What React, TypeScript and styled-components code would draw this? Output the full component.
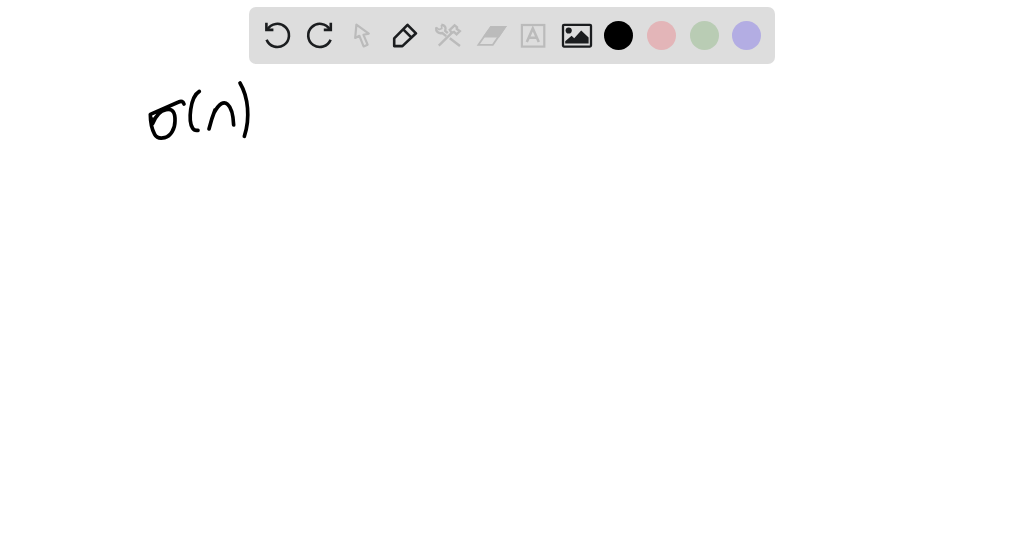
import React, { useState } from "react";
import styled, { createGlobalStyle } from "styled-components";

const GlobalStyle = createGlobalStyle`
  *, *::before, *::after { box-sizing: border-box; }
  body { margin: 0; background: #ffffff; font-family: "Liberation Sans", Arial, sans-serif; }
`;

const Page = styled.div`
  display: flex;
  flex-direction: column;
  min-height: 100vh;
`;

const Header = styled.header`
  display: flex;
  justify-content: center;
  padding: 7px 8px 0;
`;

const Toolbar = styled.div`
  display: flex;
  flex: 1;
  align-items: center;
  justify-content: space-between;
  max-width: 526px;
  padding: 13px 12px;
  border-radius: 7px;
  background: #dddddd;
`;

const ToolButton = styled.button`
  display: flex;
  width: 32px;
  height: 31px;
  padding: 0;
  border: 0;
  background: none;
  color: #1b1d1f;
  cursor: pointer;

  &:disabled {
    color: #bbbbbb;
    cursor: default;
  }
`;

const Icon = styled.svg`
  width: 32px;
  height: 31px;
  fill: none;
  stroke: currentColor;
  stroke-width: 2.6px;
  overflow: visible;
`;

const SwatchSlot = styled.label`
  display: flex;
  justify-content: center;
  width: 32px;
`;

const Swatch = styled.input<{ $color: string }>`
  appearance: none;
  width: 29px;
  height: 29px;
  margin: 0;
  border-radius: 50%;
  background: ${(p) => p.$color};
  cursor: pointer;
`;

const Board = styled.main`
  display: flex;
  flex: 1;
`;

const Drawing = styled.svg`
  flex: 1;
  min-height: 160px;
  fill: none;
  stroke: #000000;
  stroke-width: 11px;
  stroke-linecap: round;
  stroke-linejoin: round;
`;

type Tool = { name: string; disabled?: boolean; art: React.ReactNode };

const tools: Tool[] = [
  {
    name: "Undo",
    art: (
      <g>
        <path d="M5.4 2.8V9.9H12.4" />
        <path d="M6.4 9.5A11.6 11.6 0 1 1 5.6 19.7" />
      </g>
    ),
  },
  {
    name: "Redo",
    art: (
      <g>
        <path d="M26.8 2.8V9.9H19.8" />
        <path d="M25.8 9.5A11.6 11.6 0 1 0 26.6 19.7" />
      </g>
    ),
  },
  {
    name: "Select",
    disabled: true,
    art: (
      <path
        d="M10.4 4.6L9.2 18L13.4 15.8L17.6 26.4L21.6 24.7L17.5 14.8L22.8 13.6Z"
        strokeWidth="2.2"
        strokeLinejoin="round"
      />
    ),
  },
  {
    name: "Pen",
    art: (
      <path
        d="M5.2 26.1V18.4L18.5 4.8L27 13.3L13.4 26.1ZM14 9.2L22.5 17.7"
        strokeLinejoin="round"
      />
    ),
  },
  {
    name: "Tools",
    disabled: true,
    art: (
      <g strokeWidth="2.4">
        <path d="M4.2 7.4C3.6 11.4 6.6 14.2 10.4 13L14.2 16.2M17.8 18.2L28 26M9.4 4.8C12.8 5 14.4 7.6 13.2 10.8L15.8 13.2" />
        <path d="M4.2 7.4L7 9.6L9.8 8.4L9.4 4.8" strokeWidth="1.6" />
        <path d="M6.8 25.6L20 12.6" />
        <path d="M17.8 9.8L22.6 5.4L25 7.2L24.8 9L27.8 11.2L24.6 14.4L22 11.9L19.6 12.8Z" />
      </g>
    ),
  },
  {
    name: "Eraser",
    disabled: true,
    art: (
      <g strokeWidth="1.8">
        <path d="M3.4 24.8L16 6.8H30.2L17.8 24.8Z" />
        <path d="M9.2 16.5L16 6.8H30.2L23.6 16.5Z" fill="currentColor" />
      </g>
    ),
  },
  {
    name: "Text",
    disabled: true,
    art: (
      <g strokeWidth="2.2">
        <rect x="4.9" y="5" width="22.4" height="21.6" />
        <path d="M9.8 22L15.8 8.4L21.8 22M12 17.8H19.6" strokeWidth="2.5" />
      </g>
    ),
  },
  {
    name: "Image",
    art: (
      <g>
        <rect x="3" y="4.8" width="28" height="21.8" rx="1" strokeWidth="2.3" />
        <circle cx="8.7" cy="10.5" r="3.1" fill="currentColor" stroke="none" />
        <path
          d="M5.2 23.4V21.2L11.6 15.8L14.2 18.2L21.2 10.4L28.6 17.6V23.4Z"
          fill="currentColor"
          stroke="none"
        />
      </g>
    ),
  },
];

const inks = [
  { name: "Black", color: "#000000" },
  { name: "Red", color: "#e3b5b8" },
  { name: "Green", color: "#b9ccb4" },
  { name: "Purple", color: "#b3ade3" },
];

export default function App() {
  const [ink, setInk] = useState("Black");

  return (
    <Page>
      <GlobalStyle />
      <Header>
        <Toolbar role="toolbar" aria-label="Drawing tools">
          {tools.map((tool) => (
            <ToolButton
              key={tool.name}
              type="button"
              aria-label={tool.name}
              disabled={tool.disabled}
            >
              <Icon viewBox="0 0 32 31" aria-hidden="true">
                {tool.art}
              </Icon>
            </ToolButton>
          ))}
          {inks.map(({ name, color }) => (
            <SwatchSlot key={name}>
              <Swatch
                type="radio"
                name="ink"
                aria-label={name}
                checked={ink === name}
                onChange={() => setInk(name)}
                $color={color}
              />
            </SwatchSlot>
          ))}
        </Toolbar>
      </Header>
      <Board>
        <Drawing role="img" aria-label="Handwritten sigma of n">
          <g transform="translate(140 11) scale(0.3333)">
            <path d="M132 87Q128 75 116 81L31 118C31 142 36 164 44 178Q52 193 74 188C92 184 105 162 105 138C106 112 98 100 78 104C56 108 45 128 38 146L37 132" />
            <path d="M178 49C150 66 144 138 158 160Q163 168 174 166" />
            <path d="M207 162C213 138 219 120 225 105M222 114C238 84 252 78 263 88C276 99 280 128 281 150" />
            <path d="M300 24C325 66 331 130 313 184" />
          </g>
        </Drawing>
      </Board>
    </Page>
  );
}
